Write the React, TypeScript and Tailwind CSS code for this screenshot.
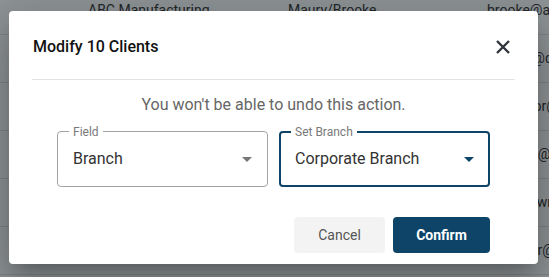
const ROWS = [
  { company: 'ABC Manufacturing', contact: 'Maury/Brooke', email: 'brooke@abcmfg.com' },
  { company: '', contact: '', email: 'samlee@deltalog.com' },
  { company: '', contact: '', email: 'jmtraynor@harbor.com' },
  { company: '', contact: '', email: 'dasmith@example.com' },
  { company: '', contact: '', email: 'amandywright@bright.com' },
  { company: '', contact: '', email: 'gehunter@metroauto.com' },
];

function Caret({ color }: { color: string }) {
  return (
    <svg width="10" height="5" viewBox="0 0 10 5" className={color}>
      <path d="M0 0 L10 0 L5 5 Z" fill="currentColor" />
    </svg>
  );
}

function SelectField({
  label,
  value,
  focused,
}: {
  label: string;
  value: string;
  focused?: boolean;
}) {
  return (
    <div
      className={`relative flex h-[56px] w-[211px] items-center justify-between rounded ${
        focused ? 'border-2 border-[#0d4468] pl-[14px] pr-[14px]' : 'border border-[#a3a3a3] pl-[15px] pr-[15px]'
      }`}
    >
      <span
        className={`absolute ${focused ? 'top-[-9px] left-[10px]' : 'top-[-8px] left-[11px]'} bg-white px-[4px] text-[12px] leading-[16px] text-[#7a7a7a]`}
      >
        {label}
      </span>
      <span className="text-[16px] leading-[24px] text-[#333]">{value}</span>
      <Caret color={focused ? 'text-[#0d4468]' : 'text-[#777]'} />
    </div>
  );
}

export default function App() {
  return (
    <div
      className="relative h-[277px] w-[549px] overflow-hidden bg-[#8e9395]"
      style={{ fontFamily: 'Roboto, "Noto Sans", sans-serif' }}
    >
      {/* table behind the overlay */}
      <div className="-mt-[13px] flex flex-col">
        {ROWS.map((r) => (
          <div
            key={r.email}
            className="flex h-[48px] items-center border-b border-[#7f8486] text-[14px] text-[#222629]"
          >
            <span className="w-[288px] shrink-0 pl-[88px] whitespace-nowrap">{r.company}</span>
            <span className="w-[199px] shrink-0 whitespace-nowrap">{r.contact}</span>
            <span className="whitespace-nowrap">{r.email}</span>
          </div>
        ))}
      </div>

      {/* dialog */}
      <div className="absolute left-[9px] top-[11px] flex h-[253px] w-[529px] flex-col rounded bg-white shadow-[0_11px_15px_-7px_rgba(0,0,0,0.2),0_24px_38px_3px_rgba(0,0,0,0.14),0_9px_46px_8px_rgba(0,0,0,0.12)]">
        <div className="mt-[24px] flex h-[24px] items-center justify-between pl-[24px] pr-[28px]">
          <h2 className="text-[16px] font-medium leading-[24px] text-[#111]">Modify 10 Clients</h2>
          <svg width="14" height="14" viewBox="0 0 14 14" className="text-[#2f353a]">
            <path d="M1 1 L13 13 M13 1 L1 13" stroke="currentColor" strokeWidth="2.4" />
          </svg>
        </div>
        <div className="mx-[23px] mt-[20px] h-px bg-[#e2e2e2]" />

        <div className="mx-[23px] flex flex-col">
          <p className="mt-[13px] text-center text-[16px] leading-[24px] text-[#666]">
            You won't be able to undo this action.
          </p>
          <div className="mt-[14px] flex justify-center gap-[11px]">
            <SelectField label="Field" value="Branch" />
            <SelectField label="Set Branch" value="Corporate Branch" focused />
          </div>
          <div className="mr-[25px] mt-[30px] flex justify-end gap-[8px]">
            <button className="h-[36px] w-[91px] rounded bg-[#f3f3f3] text-[14px] text-[#555]">
              Cancel
            </button>
            <button className="h-[36px] w-[97px] rounded bg-[#0d4468] text-[14px] font-bold text-white">
              Confirm
            </button>
          </div>
        </div>
      </div>
    </div>
  );
}
